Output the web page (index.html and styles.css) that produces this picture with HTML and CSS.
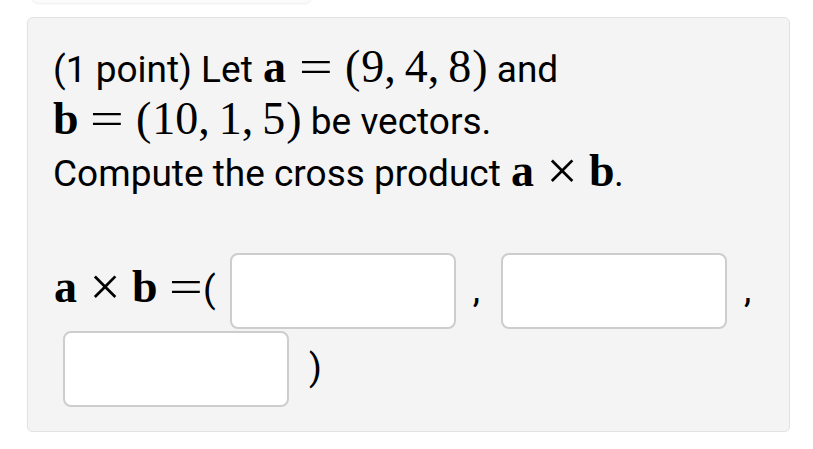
FILE: index.html
```html
<!DOCTYPE html>
<html lang="en">
<head>
<meta charset="utf-8">
<title>Cross product</title>
<link rel="stylesheet" href="styles.css">
</head>
<body>
<div class="prev"></div>
<div class="panel">
  <div class="q">(1 point) Let <span class="m"><b class="v">a</b><span class="rel">=</span><span class="op">(</span>9<span class="p">,</span>4<span class="p">,</span>8<span class="cl">)</span></span> and <span class="m"><b class="v">b</b><span class="rel">=</span><span class="op">(</span>10<span class="p">,</span>1<span class="p">,</span>5<span class="cl">)</span></span> be vectors.<br>Compute the cross product <span class="m"><b class="v">a</b><span class="bin">×</span><b class="v">b</b></span>.</div>
  <div class="ans">
    <span class="lead"><span class="m"><b class="v">a</b><span class="bin">×</span><b class="v">b</b><span class="rel end">=</span></span>(</span>
    <input class="box first" type="text" aria-label="first component">
    <span class="sep">,</span>
    <input class="box" type="text" aria-label="second component">
    <span class="sep">,</span>
    <input class="box third" type="text" aria-label="third component">
    <span class="close">)</span>
  </div>
</div>
</body>
</html>
```

FILE: styles.css
```css
html, body {
  margin: 0;
  padding: 0;
  background: #ffffff;
}

body {
  font-family: Roboto, "Noto Sans", sans-serif;
  color: #000;
  overflow: hidden;
}

.prev {
  width: 281px;
  height: 20px;
  margin: -17px 0 0 31px;
  background: #fbfbfb;
  border-radius: 0 0 8px 8px;
  box-shadow: 0 1px 2px rgba(0, 0, 0, 0.08);
}

.panel {
  margin: 14px 23px 0 27px;
  padding: 26px 25px 24px 25px;
  background: #f4f4f4;
  border: 1px solid #e2e2e2;
  border-radius: 6px;
  box-shadow: 0 1px 2px rgba(0, 0, 0, 0.04);
}

.q {
  font-size: 37px;
  line-height: 52px;
}

.m {
  font-family: "Liberation Serif", "Times New Roman", serif;
  font-size: 46px;
  line-height: 1;
  white-space: nowrap;
}

.v {
  font-weight: bold;
  display: inline-block;
  width: 25px;
  text-align: center;
}

.rel {
  display: inline-block;
  width: 34px;
  margin: 0 12px;
  text-align: center;
  transform: scaleX(1.3);
}

.rel.end {
  margin-right: 0;
}

.bin {
  display: inline-block;
  width: 34px;
  margin: 0 10px;
  text-align: center;
  transform: scale(1.2);
}

.op {
  margin-right: 1px;
}

.p {
  margin-right: 9px;
}

.cl {
  margin-left: 1px;
}

.ans {
  margin-top: 53px;
  display: flex;
  flex-wrap: wrap;
  align-items: baseline;
  row-gap: 2px;
  font-size: 37px;
  line-height: 52px;
}

.box {
  box-sizing: border-box;
  width: 226px;
  height: 76px;
  margin: 0 0 0 10px;
  padding: 0 10px;
  font-family: Roboto, sans-serif;
  font-size: 30px;
  background: #ffffff;
  border: 2px solid #cdcdcd;
  border-radius: 8px;
  outline: none;
}

.box.first {
  margin-left: 14px;
}

.sep {
  margin: 0 11px 0 17px;
}

.close {
  margin-left: 20px;
}
```
